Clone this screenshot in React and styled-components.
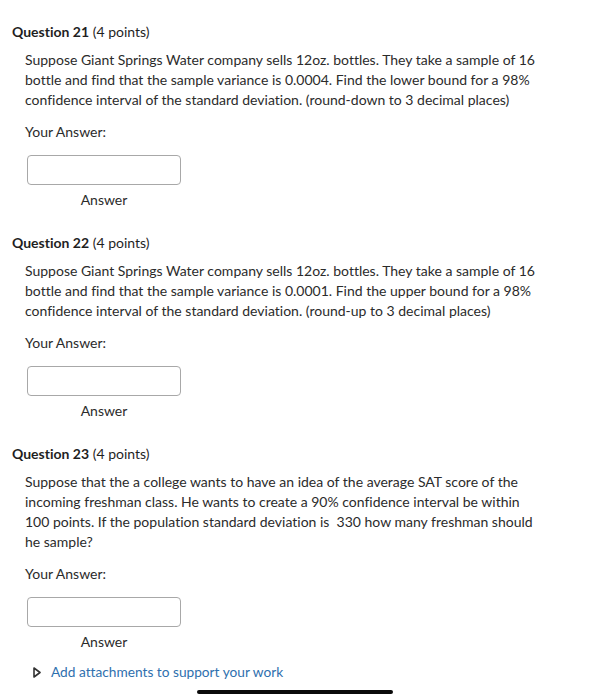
import React from "react";
import styled, { createGlobalStyle } from "styled-components";

const GlobalStyle = createGlobalStyle`
  html, body {
    margin: 0;
    padding: 0;
    background: #ffffff;
  }
  body {
    font-family: Lato, "Open Sans", sans-serif;
    color: #2b2b2b;
    font-variant-ligatures: none;
  }
`;

const Page = styled.div`
  width: 591px;
  height: 700px;
  position: relative;
  overflow: hidden;
  padding-top: 22px;
  box-sizing: border-box;
`;

const Question = styled.section`
  padding-left: 12px;
  margin-bottom: 23px;
`;

const Heading = styled.h2`
  margin: 0;
  font-size: 14px;
  line-height: 20px;
  font-weight: 400;
  color: #1f1f1f;

  b {
    font-weight: 700;
  }
`;

const Body = styled.div`
  padding-left: 13px;
  padding-top: 8px;
`;

const Text = styled.p`
  margin: 0;
  font-size: 14px;
  line-height: 20px;
  width: 520px;
`;

const Label = styled.div`
  margin-top: 12px;
  font-size: 14px;
  line-height: 20px;
`;

const AnswerBlock = styled.div`
  margin-top: 13px;
  margin-left: 2px;
  width: 154px;
  display: flex;
  flex-direction: column;
  align-items: center;
`;

const Input = styled.div`
  width: 154px;
  height: 30px;
  box-sizing: border-box;
  border: 1px solid #a8a8a8;
  border-radius: 4px;
`;

const Caption = styled.div`
  margin-top: 5px;
  font-size: 14px;
  line-height: 20px;
`;

const Attach = styled.div`
  display: flex;
  align-items: center;
  gap: 10px;
  padding-left: 33px;
  margin-top: -13px;
  font-size: 13.7px;
  line-height: 20px;
  color: #2e6fae;
`;

const HomeBar = styled.div`
  position: absolute;
  left: 197px;
  bottom: 6px;
  width: 196px;
  height: 4px;
  border-radius: 2px;
  background: #0a0a0a;
`;

const questions = [
  {
    n: 21,
    text: "Suppose Giant Springs Water company sells 12oz. bottles. They take a sample of 16 bottle and find that the sample variance is 0.0004. Find the lower bound for a 98% confidence interval of the standard deviation. (round-down to 3 decimal places)",
  },
  {
    n: 22,
    text: "Suppose Giant Springs Water company sells 12oz. bottles. They take a sample of 16 bottle and find that the sample variance is 0.0001. Find the upper bound for a 98% confidence interval of the standard deviation. (round-up to 3 decimal places)",
  },
  {
    n: 23,
    text: "Suppose that the a college wants to have an idea of the average SAT score of the incoming freshman class. He wants to create a 90% confidence interval be within 100 points. If the population standard deviation is \u00a0330 how many freshman should he sample?",
  },
];

const App = () => (
  <>
    <GlobalStyle />
    <Page>
      {questions.map((q) => (
        <Question key={q.n}>
          <Heading>
            <b>Question {q.n}</b> (4 points)
          </Heading>
          <Body>
            <Text>{q.text}</Text>
            <Label>Your Answer:</Label>
            <AnswerBlock>
              <Input />
              <Caption>Answer</Caption>
            </AnswerBlock>
          </Body>
        </Question>
      ))}
      <Attach>
        <svg width="8" height="11" viewBox="0 0 8 11">
          <path
            d="M1 1 L7 5.5 L1 10 Z"
            fill="none"
            stroke="#333"
            strokeWidth="1.6"
            strokeLinejoin="round"
          />
        </svg>
        <span>Add attachments to support your work</span>
      </Attach>
      <HomeBar />
    </Page>
  </>
);

export default App;
